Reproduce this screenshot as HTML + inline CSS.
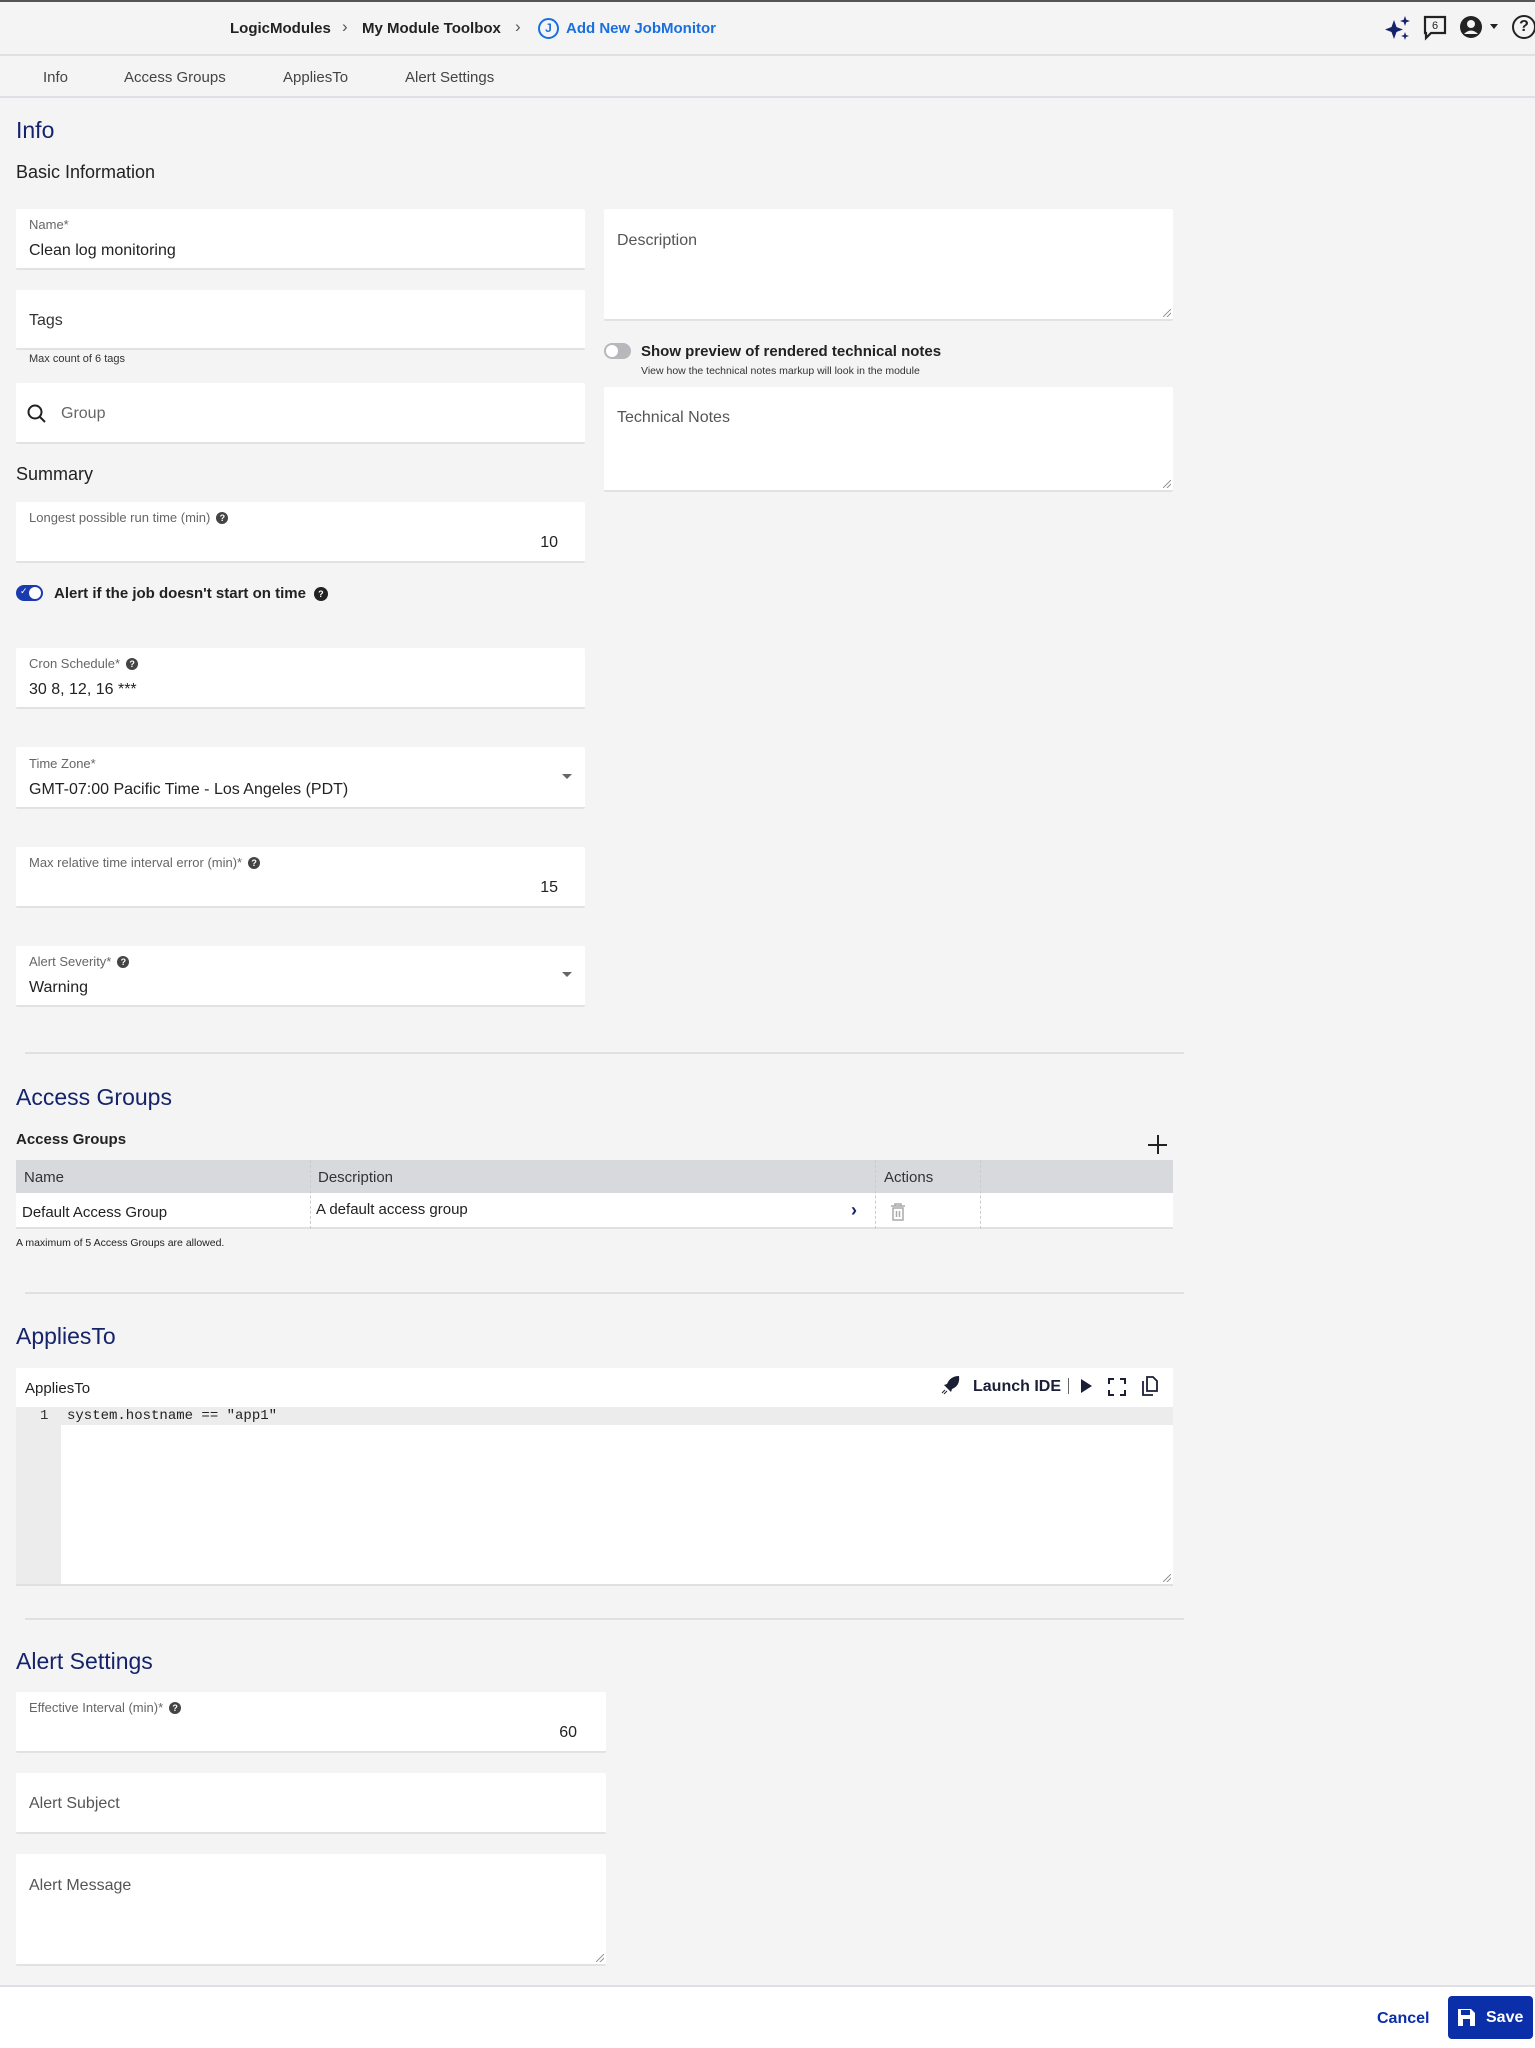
<!DOCTYPE html>
<html><head><meta charset="utf-8"><style>
*{box-sizing:border-box;margin:0;padding:0}
body{width:1535px;height:2048px;background:#f4f4f4;font-family:"Liberation Sans",sans-serif;color:#222;position:relative;overflow:hidden}
.a{position:absolute;white-space:nowrap}
.box{position:absolute;background:#fff;border-bottom:2px solid #e2e2e6;border-radius:2px}
.lbl{position:absolute;font-size:13px;color:#666;margin-top:1px}
.val{position:absolute;font-size:16px;color:#222;margin-top:2px}
.ph{position:absolute;font-size:16px;color:#555;margin-top:2px}
.h1{position:absolute;font-size:23px;color:#15236b}
.h2{position:absolute;font-size:18px;color:#222}
.q{display:inline-block;width:12px;height:12px;border-radius:50%;background:#444;color:#fff;font-size:9px;font-weight:bold;text-align:center;line-height:12px;vertical-align:1px;margin-left:6px}
.sep{position:absolute;left:25px;width:1159px;height:2px;background:#e0e0e0}
.grip{position:absolute;right:2px;bottom:2px;width:8px;height:8px;background:linear-gradient(135deg,transparent 45%,#999 46%,#999 54%,transparent 55%,transparent 70%,#999 71%,#999 79%,transparent 80%)}
</style></head><body>
<div class="a" style="left:0;top:0;width:1535px;height:2px;background:#555"></div>
<div class="a" style="left:0;top:54px;width:1535px;height:2px;background:#e0e0e4"></div>
<div class="a" style="left:230px;top:20px;font-size:15px;font-weight:bold;color:#222">LogicModules</div>
<div class="a" style="left:342px;top:17px;font-size:17px;color:#555">›</div>
<div class="a" style="left:362px;top:20px;font-size:15px;font-weight:bold;color:#222">My Module Toolbox</div>
<div class="a" style="left:515px;top:17px;font-size:17px;color:#555">›</div>
<div class="a" style="left:538px;top:18px;width:21px;height:21px;border:2px solid #1a6fe0;border-radius:50%;color:#1a6fe0;font-size:12px;font-weight:bold;text-align:center;line-height:17px">J</div>
<div class="a" style="left:566px;top:20px;font-size:15px;font-weight:bold;color:#1a6fe0">Add New JobMonitor</div>
<svg class="a" style="left:1385px;top:14px" width="26" height="28" viewBox="0 0 26 28"><path d="M9 6 L11.5 13 L18 15.5 L11.5 18 L9 25 L6.5 18 L0 15.5 L6.5 13Z" fill="#15236b"/><path d="M20 2 L21.3 5.7 L25 7 L21.3 8.3 L20 12 L18.7 8.3 L15 7 L18.7 5.7Z" fill="#15236b"/><path d="M20 18 L21 21 L24 22 L21 23 L20 26 L19 23 L16 22 L19 21Z" fill="#15236b"/></svg>
<svg class="a" style="left:1423px;top:15px" width="24" height="26" viewBox="0 0 24 26"><path d="M2 2 H22 V18 H8 L3 23 V18 H2Z" fill="none" stroke="#222" stroke-width="2.2"/><text x="12" y="14" font-size="11" text-anchor="middle" fill="#222" font-family="Liberation Sans">6</text></svg>
<svg class="a" style="left:1459px;top:15px" width="24" height="24" viewBox="0 0 24 24"><circle cx="12" cy="12" r="11" fill="#222"/><circle cx="12" cy="9" r="4" fill="#f4f4f4"/><path d="M5 19 Q12 12 19 19" fill="#f4f4f4"/></svg>
<div class="a" style="left:1490px;top:24px;border:4px solid transparent;border-top:5px solid #222"></div>
<div class="a" style="left:1512px;top:15px;width:24px;height:24px;border:2px solid #222;border-radius:50%;font-size:16px;text-align:center;line-height:20px;font-weight:bold">?</div>

<div class="a" style="left:0;top:96px;width:1535px;height:2px;background:#dfe0e6"></div>
<div class="a" style="left:43px;top:69px;font-size:15px;color:#444">Info</div>
<div class="a" style="left:124px;top:69px;font-size:15px;color:#444">Access Groups</div>
<div class="a" style="left:283px;top:69px;font-size:15px;color:#444">AppliesTo</div>
<div class="a" style="left:405px;top:69px;font-size:15px;color:#444">Alert Settings</div>

<div class="h1" style="left:16px;top:117px">Info</div>
<div class="h2" style="left:16px;top:162px">Basic Information</div>

<div class="box" style="left:16px;top:209px;width:569px;height:61px"><div class="lbl" style="left:13px;top:7px">Name*</div><div class="val" style="left:13px;top:31px">Clean log monitoring</div></div>
<div class="box" style="left:16px;top:290px;width:569px;height:60px"><div class="ph" style="left:13px;top:20px;color:#333">Tags</div></div>
<div class="a" style="left:29px;top:353px;font-size:11px;color:#333">Max count of 6 tags</div>
<div class="box" style="left:16px;top:383px;width:569px;height:61px">
<svg style="position:absolute;left:11px;top:21px" width="20" height="20" viewBox="0 0 20 20"><circle cx="8" cy="8" r="6.5" fill="none" stroke="#222" stroke-width="2"/><path d="M13 13 L18 18" stroke="#222" stroke-width="2"/></svg>
<div class="ph" style="left:45px;top:20px;color:#666">Group</div></div>

<div class="h2" style="left:16px;top:464px">Summary</div>
<div class="box" style="left:16px;top:502px;width:569px;height:61px"><div class="lbl" style="left:13px;top:7px">Longest possible run time (min)<span class="q">?</span></div><div class="val" style="right:27px;top:30px">10</div></div>

<div class="a" style="left:16px;top:585px;width:27px;height:16px;border-radius:8px;background:#1a3bb0"><div style="position:absolute;right:2px;top:2px;width:12px;height:12px;border-radius:50%;background:#fff"></div><div style="position:absolute;left:4px;top:1px;color:#fff;font-size:9px">✓</div></div>
<div class="a" style="left:54px;top:585px;font-size:15px;font-weight:bold;color:#222">Alert if the job doesn't start on time<span class="q" style="width:14px;height:14px;line-height:14px;background:#222;margin-left:8px">?</span></div>

<div class="box" style="left:16px;top:648px;width:569px;height:61px"><div class="lbl" style="left:13px;top:7px">Cron Schedule*<span class="q">?</span></div><div class="val" style="left:13px;top:31px">30 8, 12, 16 ***</div></div>
<div class="box" style="left:16px;top:747px;width:569px;height:62px"><div class="lbl" style="left:13px;top:8px">Time Zone*</div><div class="val" style="left:13px;top:32px">GMT-07:00 Pacific Time - Los Angeles (PDT)</div><div style="position:absolute;left:546px;top:27px;border:5px solid transparent;border-top:5px solid #666"></div></div>
<div class="box" style="left:16px;top:847px;width:569px;height:61px"><div class="lbl" style="left:13px;top:7px">Max relative time interval error (min)*<span class="q">?</span></div><div class="val" style="right:27px;top:30px">15</div></div>
<div class="box" style="left:16px;top:946px;width:569px;height:61px"><div class="lbl" style="left:13px;top:7px">Alert Severity*<span class="q">?</span></div><div class="val" style="left:13px;top:31px">Warning</div><div style="position:absolute;left:546px;top:26px;border:5px solid transparent;border-top:5px solid #666"></div></div>

<div class="box" style="left:604px;top:209px;width:569px;height:112px;border-bottom-width:2px"><div class="ph" style="left:13px;top:21px">Description</div><div class="grip"></div></div>
<div class="a" style="left:604px;top:343px;width:27px;height:16px;border-radius:8px;background:#b8b8bc"><div style="position:absolute;left:2px;top:2px;width:12px;height:12px;border-radius:50%;background:#fff"></div></div>
<div class="a" style="left:641px;top:343px;font-size:15px;font-weight:bold;color:#222">Show preview of rendered technical notes</div>
<div class="a" style="left:641px;top:365px;font-size:10.5px;color:#333">View how the technical notes markup will look in the module</div>
<div class="box" style="left:604px;top:387px;width:569px;height:105px"><div class="ph" style="left:13px;top:20px">Technical Notes</div><div class="grip"></div></div>

<div class="sep" style="top:1052px"></div>
<div class="h1" style="left:16px;top:1084px">Access Groups</div>
<div class="a" style="left:16px;top:1131px;font-size:15px;font-weight:bold;color:#222">Access Groups</div>
<div class="a" style="left:1148px;top:1144px;width:19px;height:2px;background:#222"></div>
<div class="a" style="left:1157px;top:1135px;width:2px;height:19px;background:#222"></div>
<div class="a" style="left:16px;top:1160px;width:1157px;height:33px;background:#d8d9dd"></div>
<div class="a" style="left:16px;top:1193px;width:1157px;height:36px;background:#fff;border-bottom:2px solid #e0e0e4"></div>
<div class="a" style="left:310px;top:1160px;width:0;height:69px;border-left:1px dashed #ccc"></div>
<div class="a" style="left:875px;top:1160px;width:0;height:69px;border-left:1px dashed #ccc"></div>
<div class="a" style="left:980px;top:1160px;width:0;height:69px;border-left:1px dashed #ccc"></div>
<div class="a" style="left:24px;top:1169px;font-size:15px;color:#333">Name</div>
<div class="a" style="left:318px;top:1169px;font-size:15px;color:#333">Description</div>
<div class="a" style="left:884px;top:1169px;font-size:15px;color:#333">Actions</div>
<div class="a" style="left:22px;top:1204px;font-size:15px;color:#222">Default Access Group</div>
<div class="a" style="left:316px;top:1201px;font-size:15px;color:#222">A default access group</div>
<div class="a" style="left:851px;top:1200px;font-size:18px;font-weight:bold;color:#15236b">›</div>
<svg class="a" style="left:890px;top:1203px" width="16" height="18" viewBox="0 0 16 18"><path d="M1 3 H15 M5 3 V1 H11 V3 M3 5 H13 V17 H3Z M6.5 8 V14 M9.5 8 V14" fill="none" stroke="#aaa" stroke-width="1.5"/></svg>
<div class="a" style="left:16px;top:1237px;font-size:10.5px;color:#222">A maximum of 5 Access Groups are allowed.</div>

<div class="sep" style="top:1292px"></div>
<div class="h1" style="left:16px;top:1323px">AppliesTo</div>
<div class="a" style="left:16px;top:1368px;width:1157px;height:218px;background:#fff;border-bottom:2px solid #e0e0e4">
<div style="position:absolute;left:9px;top:12px;font-size:15px;color:#222">AppliesTo</div>
<div style="position:absolute;left:0;top:39px;width:1157px;height:18px;background:#ececec"></div>
<div style="position:absolute;left:0;top:39px;width:45px;height:177px;background:#ececec"></div>
<div style="position:absolute;left:24px;top:40px;font-family:'Liberation Mono',monospace;font-size:14px;color:#333">1</div>
<div style="position:absolute;left:51px;top:40px;font-family:'Liberation Mono',monospace;font-size:14px;color:#222">system.hostname == "app1"</div>
<div class="grip"></div>
</div>
<svg class="a" style="left:941px;top:1375px" width="20" height="20" viewBox="0 0 20 20"><path d="M18 1 C12 1 8 4 6 9 L3 10 L5 12 L8 15 L10 17 L11 14 C16 12 19 8 18 1Z" fill="#1a1f36"/><path d="M4 15 L1 18 M6 16 L3 19" stroke="#1a1f36" stroke-width="1"/></svg>
<div class="a" style="left:973px;top:1378px;font-size:16px;font-weight:bold;color:#1a1f36">Launch IDE</div>
<div class="a" style="left:1068px;top:1378px;width:1px;height:16px;background:#666"></div>
<div class="a" style="left:1081px;top:1379px;border:7px solid transparent;border-left:11px solid #1a1f36;border-right:0"></div>
<svg class="a" style="left:1108px;top:1378px" width="18" height="18" viewBox="0 0 18 18"><path d="M1 6 V1 H6 M12 1 H17 V6 M17 12 V17 H12 M6 17 H1 V12" fill="none" stroke="#1a1f36" stroke-width="2"/></svg>
<svg class="a" style="left:1142px;top:1376px" width="16" height="20" viewBox="0 0 16 20"><path d="M5 1 H11 L15 5 V15 H5Z M1 5 V19 H11" fill="none" stroke="#1a1f36" stroke-width="1.8"/></svg>

<div class="sep" style="top:1618px"></div>
<div class="h1" style="left:16px;top:1648px">Alert Settings</div>
<div class="box" style="left:16px;top:1692px;width:590px;height:61px"><div class="lbl" style="left:13px;top:7px">Effective Interval (min)*<span class="q">?</span></div><div class="val" style="right:29px;top:30px">60</div></div>
<div class="box" style="left:16px;top:1773px;width:590px;height:61px"><div class="ph" style="left:13px;top:20px">Alert Subject</div></div>
<div class="box" style="left:16px;top:1854px;width:590px;height:112px"><div class="ph" style="left:13px;top:21px">Alert Message</div><div class="grip"></div></div>

<div class="a" style="left:0;top:1985px;width:1535px;height:63px;background:#fff;border-top:2px solid #dfe0e6"></div>
<div class="a" style="left:1377px;top:2010px;font-size:16px;font-weight:bold;color:#0a2fa8">Cancel</div>
<div class="a" style="left:1448px;top:1996px;width:85px;height:43px;background:#0a2fa8;border-radius:4px">
<svg style="position:absolute;left:9px;top:12px" width="19" height="19" viewBox="0 0 19 19"><path d="M1 1 H14 L18 5 V18 H1Z" fill="#fff"/><rect x="4" y="2" width="9" height="5" fill="#0a2fa8"/><rect x="6" y="11" width="7" height="7" fill="#0a2fa8"/></svg>
<div style="position:absolute;left:38px;top:13px;font-size:16px;font-weight:bold;color:#fff">Save</div></div>
</body></html>
